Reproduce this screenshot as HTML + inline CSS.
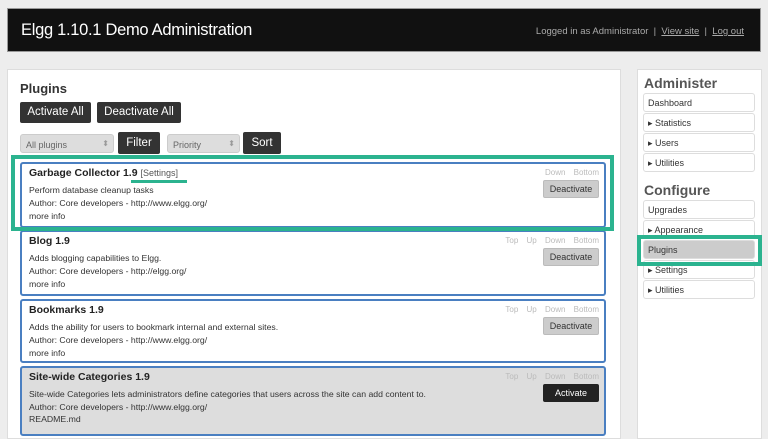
<!DOCTYPE html>
<html><head><style>
*{margin:0;padding:0;box-sizing:border-box}
body{width:768px;height:429px;overflow:hidden;background:#ededed;font-family:"Liberation Sans",sans-serif;position:relative;color:#333}
.abs{position:absolute}
#hdr{left:7px;top:8px;width:754px;height:44px;background:#111;border:1px solid #999}
#hdr h1{position:absolute;left:13px;top:12px;color:#fff;font-size:16.5px;font-weight:normal;letter-spacing:-0.3px}
#hdr .r{position:absolute;right:16px;top:17px;color:#aaa;font-size:9.5px}
#hdr .r u{color:#aaa}
#main{left:7px;top:69px;width:614px;height:370px;background:#fff;border:1px solid #ddd}
#side{left:637px;top:69px;width:125px;height:370px;background:#fff;border:1px solid #ddd}
.btn{position:absolute;background:#333;color:#fff;font-size:11.5px;text-align:center;border-radius:2px}
.sel{position:absolute;background:#ddd;border:1px solid #ccc;border-radius:3px;color:#666;font-size:9px;padding:5px 0 0 5px}
.sel:after{content:"⬍";position:absolute;right:4px;top:4px;font-size:8px;color:#999}
.pl{position:absolute;left:20px;width:586px;border:2px solid #4a7fc1;border-radius:3px;background:#fff}
.pl h3{position:absolute;left:7px;top:3px;font-size:10.5px;font-weight:bold;color:#222}
.pl .d{position:absolute;left:7px;font-size:8.7px;color:#333;line-height:12.5px}
.pl .o{position:absolute;right:5px;top:4px;font-size:8px;color:#bbb;word-spacing:6px}
.pl .b{position:absolute;right:5px;top:16px;width:56px;height:18px;background:#ccc;border:1px solid #bbb;border-radius:2px;font-size:9px;text-align:center;line-height:16px;color:#333}
.si{position:absolute;left:643px;width:112px;height:19px;border:1px solid #ddd;border-radius:3px;font-size:9px;padding:4px 0 0 4px;color:#333;background:#fff}
.sh{position:absolute;left:644px;font-size:14px;font-weight:bold;color:#555}
.g{position:absolute;border:4px solid #2bb38f}
</style></head><body>
<div id="hdr" class="abs"><h1>Elgg 1.10.1 Demo Administration</h1><div class="r">Logged in as Administrator &nbsp;|&nbsp; <u>View site</u> &nbsp;|&nbsp; <u>Log out</u></div></div>
<div id="main" class="abs"></div>
<div id="side" class="abs"></div>
<div class="abs" style="left:20px;top:81px;font-size:13px;font-weight:bold;color:#333">Plugins</div>
<div class="btn" style="left:20px;top:102px;width:71px;height:21px;line-height:21px">Activate All</div>
<div class="btn" style="left:97px;top:102px;width:84px;height:21px;line-height:21px">Deactivate All</div>
<div class="sel" style="left:20px;top:134px;width:94px;height:19px">All plugins</div>
<div class="btn" style="left:118px;top:132px;width:42px;height:22px;line-height:22px">Filter</div>
<div class="sel" style="left:167px;top:134px;width:73px;height:19px">Priority</div>
<div class="btn" style="left:243px;top:132px;width:38px;height:22px;line-height:22px">Sort</div>

<div class="pl" style="top:162px;height:66px"><h3>Garbage Collector 1.9 <span style="font-weight:normal;font-size:9px;color:#555">[Settings]</span></h3><div class="o">Down Bottom</div><div class="b">Deactivate</div><div class="d" style="top:20px">Perform database cleanup tasks<br>Author: Core developers - http://www.elgg.org/</div><div class="d" style="top:46px">more info</div></div>
<div class="pl" style="top:230px;height:66px"><h3>Blog 1.9</h3><div class="o">Top Up Down Bottom</div><div class="b">Deactivate</div><div class="d" style="top:20px">Adds blogging capabilities to Elgg.<br>Author: Core developers - http://elgg.org/</div><div class="d" style="top:46px">more info</div></div>
<div class="pl" style="top:299px;height:64px"><h3>Bookmarks 1.9</h3><div class="o">Top Up Down Bottom</div><div class="b">Deactivate</div><div class="d" style="top:20px">Adds the ability for users to bookmark internal and external sites.<br>Author: Core developers - http://www.elgg.org/</div><div class="d" style="top:46px">more info</div></div>
<div class="pl" style="top:366px;height:70px;background:#ddd"><h3>Site-wide Categories 1.9</h3><div class="o">Top Up Down Bottom</div><div class="b" style="background:#222;color:#fff;border-color:#222">Activate</div><div class="d" style="top:20px">Site-wide Categories lets administrators define categories that users across the site can add content to.<br>Author: Core developers - http://www.elgg.org/<br>README.md</div></div>

<div class="g" style="left:11px;top:155px;width:603px;height:76px"></div>
<div class="abs" style="left:131px;top:180px;width:56px;height:3px;background:#2bb38f"></div>

<div class="sh" style="top:75px">Administer</div>
<div class="si" style="top:93px">Dashboard</div>
<div class="si" style="top:113px">▸ Statistics</div>
<div class="si" style="top:133px">▸ Users</div>
<div class="si" style="top:153px">▸ Utilities</div>
<div class="sh" style="top:182px">Configure</div>
<div class="si" style="top:200px">Upgrades</div>
<div class="si" style="top:220px">▸ Appearance</div>
<div class="si" style="top:240px;background:#ccc">Plugins</div>
<div class="si" style="top:260px">▸ Settings</div>
<div class="si" style="top:280px">▸ Utilities</div>
<div class="g" style="left:637px;top:235px;width:125px;height:31px"></div>
</body></html>
